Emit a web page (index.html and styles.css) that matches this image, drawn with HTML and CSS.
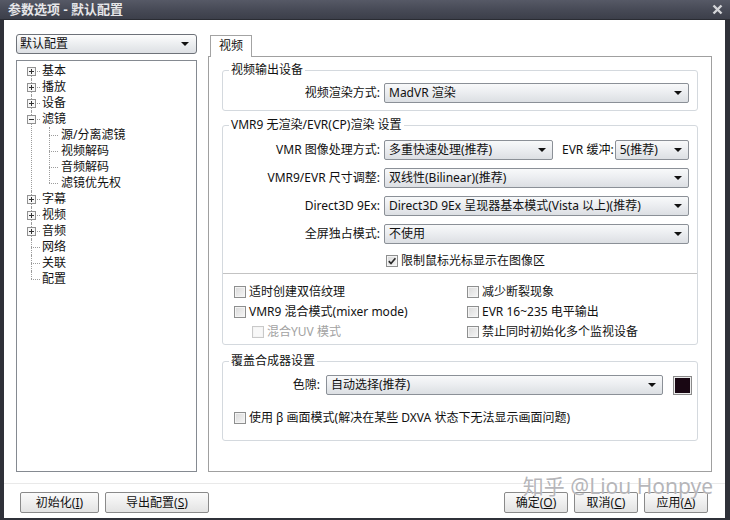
FILE: index.html
```html
<!DOCTYPE html>
<html lang="zh-CN">
<head>
  <meta charset="UTF-8">
  <title>参数选项 - 默认配置</title>
  <link rel="stylesheet" href="styles.css">
</head>
<body>
<div class="titlebar">
  <span class="title">参数选项 - 默认配置</span>
  <svg class="close" width="11" height="11" viewBox="0 0 11 11"><path d="M1.5 1.5L9.5 9.5M9.5 1.5L1.5 9.5" stroke="#d4d5d9" stroke-width="2.4"/></svg>
</div>

<div class="dialog">
  <div class="main">
    <div class="side">
      <div class="combo"><span class="val">默认配置</span><span class="arrow"></span></div>
      <div class="tree">
        <ul class="root">
          <li class="node first"><div class="row"><svg class="exp" width="9" height="9"><rect x="0.5" y="0.5" width="8" height="8" fill="#f7f7f7" stroke="#919191"/><path d="M2 4.5h5M4.5 2v5" stroke="#333"/></svg><span class="lbl">基本</span></div></li>
          <li class="node"><div class="row"><svg class="exp" width="9" height="9"><rect x="0.5" y="0.5" width="8" height="8" fill="#f7f7f7" stroke="#919191"/><path d="M2 4.5h5M4.5 2v5" stroke="#333"/></svg><span class="lbl">播放</span></div></li>
          <li class="node"><div class="row"><svg class="exp" width="9" height="9"><rect x="0.5" y="0.5" width="8" height="8" fill="#f7f7f7" stroke="#919191"/><path d="M2 4.5h5M4.5 2v5" stroke="#333"/></svg><span class="lbl">设备</span></div></li>
          <li class="node"><div class="row"><svg class="exp" width="9" height="9"><rect x="0.5" y="0.5" width="8" height="8" fill="#f7f7f7" stroke="#919191"/><path d="M2 4.5h5" stroke="#333"/></svg><span class="lbl">滤镜</span></div>
            <ul class="sub">
              <li><div class="row"><span class="lbl">源/分离滤镜</span></div></li>
              <li><div class="row"><span class="lbl">视频解码</span></div></li>
              <li><div class="row"><span class="lbl">音频解码</span></div></li>
              <li><div class="row"><span class="lbl">滤镜优先权</span></div></li>
            </ul>
          </li>
          <li class="node"><div class="row"><svg class="exp" width="9" height="9"><rect x="0.5" y="0.5" width="8" height="8" fill="#f7f7f7" stroke="#919191"/><path d="M2 4.5h5M4.5 2v5" stroke="#333"/></svg><span class="lbl">字幕</span></div></li>
          <li class="node"><div class="row"><svg class="exp" width="9" height="9"><rect x="0.5" y="0.5" width="8" height="8" fill="#f7f7f7" stroke="#919191"/><path d="M2 4.5h5M4.5 2v5" stroke="#333"/></svg><span class="lbl">视频</span></div></li>
          <li class="node"><div class="row"><svg class="exp" width="9" height="9"><rect x="0.5" y="0.5" width="8" height="8" fill="#f7f7f7" stroke="#919191"/><path d="M2 4.5h5M4.5 2v5" stroke="#333"/></svg><span class="lbl">音频</span></div></li>
          <li class="node"><div class="row"><span class="lbl leaf">网络</span></div></li>
          <li class="node"><div class="row"><span class="lbl leaf">关联</span></div></li>
          <li class="node last"><div class="row"><span class="lbl leaf">配置</span></div></li>
        </ul>
      </div>
    </div>

    <div class="right">
      <div class="tabs"><div class="tab">视频</div></div>
      <div class="panel">

        <fieldset class="g1">
          <legend>视频输出设备</legend>
          <div class="frow">
            <span class="flabel">视频渲染方式:</span>
            <div class="sel"><span class="val">MadVR 渲染</span><span class="arrow"></span></div>
          </div>
        </fieldset>

        <fieldset class="g2">
          <legend>VMR9 无渲染/EVR(CP)渲染 设置</legend>
          <div class="frow">
            <span class="flabel">VMR 图像处理方式:</span>
            <div class="split">
              <div class="sel s-mix"><span class="val">多重快速处理(推荐)</span><span class="arrow"></span></div>
              <span class="evr">EVR 缓冲:</span>
              <div class="sel s-buf"><span class="val">5(推荐)</span><span class="arrow"></span></div>
            </div>
          </div>
          <div class="frow">
            <span class="flabel">VMR9/EVR 尺寸调整:</span>
            <div class="sel"><span class="val">双线性(Bilinear)(推荐)</span><span class="arrow"></span></div>
          </div>
          <div class="frow">
            <span class="flabel">Direct3D 9Ex:</span>
            <div class="sel"><span class="val">Direct3D 9Ex 呈现器基本模式(Vista 以上)(推荐)</span><span class="arrow"></span></div>
          </div>
          <div class="frow">
            <span class="flabel">全屏独占模式:</span>
            <div class="sel"><span class="val">不使用</span><span class="arrow"></span></div>
          </div>
          <div class="check-line">
            <span class="cb on"><svg width="10" height="10" viewBox="0 0 10 10"><path d="M1.8 5.2L4 7.5L8.4 2.2" fill="none" stroke="#2b2b2b" stroke-width="1.7"/></svg></span>限制鼠标光标显示在图像区
          </div>
          <div class="sep"></div>
          <div class="cgrid">
            <div class="citem"><span class="cb"></span>适时创建双倍纹理</div>
            <div class="citem"><span class="cb"></span>减少断裂现象</div>
            <div class="citem"><span class="cb"></span>VMR9 混合模式(mixer mode)</div>
            <div class="citem"><span class="cb"></span>EVR 16~235 电平输出</div>
            <div class="citem off"><span class="cb"></span>混合YUV 模式</div>
            <div class="citem"><span class="cb"></span>禁止同时初始化多个监视设备</div>
          </div>
        </fieldset>

        <fieldset class="g3">
          <legend>覆盖合成器设置</legend>
          <div class="crow">
            <span class="clabel">色隙:</span>
            <div class="sel"><span class="val">自动选择(推荐)</span><span class="arrow"></span></div>
            <span class="swatch"></span>
          </div>
          <div class="citem beta"><span class="cb"></span>使用 β 画面模式(解决在某些 DXVA 状态下无法显示画面问题)</div>
        </fieldset>

      </div>
    </div>
  </div>

  <div class="bottom">
    <div class="btn b-init">初始化(<u>I</u>)</div>
    <div class="btn b-export">导出配置(<u>S</u>)</div>
    <div class="spacer"></div>
    <div class="btn">确定(<u>O</u>)</div>
    <div class="btn">取消(<u>C</u>)</div>
    <div class="btn">应用(<u>A</u>)</div>
  </div>

  <div class="watermark">知乎 @Liou Honpye</div>
</div>
</body>
</html>
```

FILE: styles.css
```css
* {
  margin: 0;
  padding: 0;
  box-sizing: border-box;
}

body {
  width: 730px;
  height: 520px;
  overflow: hidden;
  background: #2f3139;
  font-family: "Noto Sans", "Noto Sans CJK SC", sans-serif;
  font-size: 12px;
  line-height: 16px;
  color: #111;
}

ul {
  list-style: none;
}

/* title bar */
.titlebar {
  height: 20px;
  display: flex;
  align-items: center;
  justify-content: space-between;
  padding: 0 7px 0 8px;
  background: linear-gradient(#565966, #464955 55%, #3c3f4a);
  border-bottom: 1px solid #2a2c33;
}

.title {
  color: #e6e6e8;
  font-weight: bold;
  font-size: 13px;
  line-height: 19px;
}

/* dialog body */
.dialog {
  position: relative;
  height: 498px;
  margin: 0 5px 0 4px;
  background: #fff;
  display: flex;
  flex-direction: column;
}

.main {
  flex: 1;
  display: flex;
  gap: 11px;
  padding: 14px 13px 11px 12px;
}

.side {
  width: 181px;
  display: flex;
  flex-direction: column;
  gap: 6px;
}

.combo {
  height: 20px;
  display: flex;
  align-items: center;
  padding: 0 7px 0 3px;
  border: 1px solid #6e7279;
  border-radius: 3px;
  background: linear-gradient(#fdfdfd, #eceef0 50%, #dde0e4);
}

.val {
  flex: 1;
  white-space: nowrap;
  overflow: hidden;
}

.arrow {
  width: 0;
  height: 0;
  border-left: 4px solid transparent;
  border-right: 4px solid transparent;
  border-top: 4px solid #111;
}

/* tree */
.tree {
  flex: 1;
  border: 1px solid #858a91;
  padding-top: 2px;
}

.node {
  position: relative;
}

.node::before {
  content: '';
  position: absolute;
  left: 14px;
  top: 0;
  bottom: 0;
  border-left: 1px dotted #9c9c9c;
}

.node.first::before {
  top: 8px;
}

.node.last::before {
  bottom: auto;
  height: 8px;
}

.row {
  position: relative;
  height: 16px;
  display: flex;
  align-items: center;
}

.row::before {
  content: '';
  position: absolute;
  left: 14px;
  top: 8px;
  width: 9px;
  border-top: 1px dotted #9c9c9c;
}

.exp {
  position: relative;
  z-index: 1;
  margin-left: 10px;
  flex: none;
}

.lbl {
  margin-left: 6px;
  white-space: nowrap;
}

.lbl.leaf {
  margin-left: 25px;
}

.sub {
  position: relative;
}

.sub::before {
  content: '';
  position: absolute;
  left: 32px;
  top: 0;
  height: 56px;
  border-left: 1px dotted #9c9c9c;
}

.sub .row::before {
  left: 32px;
}

.sub .lbl {
  margin-left: 44px;
}

/* tab panel */
.right {
  flex: 1;
  display: flex;
  flex-direction: column;
  padding-top: 1px;
}

.tabs {
  height: 21px;
  display: flex;
  padding-left: 2px;
}

.tab {
  position: relative;
  z-index: 1;
  height: 22px;
  padding: 0 8px;
  border: 1px solid #a3a3a3;
  border-bottom: none;
  background: #fff;
  line-height: 20px;
}

.panel {
  flex: 1;
  border: 1px solid #a0a0a0;
  padding: 6px 13px 0 13px;
}

fieldset {
  border: 1px solid #d4d9de;
  border-radius: 3px;
  padding: 0 6px;
}

legend {
  padding: 0 2px;
  line-height: 14px;
}

.g1 {
  padding-bottom: 7px;
}

.g1 .frow {
  margin-top: 6px;
}

.g2 {
  margin-top: 7px;
  padding-bottom: 2px;
}

.g2 .frow {
  margin-top: 8px;
}

.g3 {
  margin-top: 9px;
  padding-bottom: 14px;
}

.frow {
  height: 20px;
  display: grid;
  grid-template-columns: 151px 1fr;
  column-gap: 4px;
  align-items: center;
  padding-right: 2px;
}

.flabel {
  text-align: right;
  white-space: nowrap;
}

.sel {
  height: 20px;
  display: flex;
  align-items: center;
  padding: 0 6px 0 4px;
  border: 1px solid #8b9097;
  border-radius: 2px;
  background: linear-gradient(#f8f9fa, #eceef1 45%, #dcdfe3);
}

.split {
  display: flex;
  align-items: center;
}

.s-mix {
  width: 169px;
}

.evr {
  margin: 0 1px 0 9px;
  white-space: nowrap;
}

.s-buf {
  flex: 1;
}

/* checkboxes */
.cb {
  width: 12px;
  height: 12px;
  flex: none;
  margin-right: 3px;
  display: flex;
  align-items: center;
  justify-content: center;
  border: 1px solid #8e8f8f;
  background: linear-gradient(135deg, #d9d9d9, #f6f6f6);
  box-shadow: inset 0 0 0 1px #f4f4f4;
}

.check-line {
  height: 16px;
  margin-top: 9px;
  padding-left: 157px;
  display: flex;
  align-items: center;
}

.sep {
  margin: 4px -6px 0;
  border-top: 1px solid #c3c3c3;
}

.cgrid {
  margin-top: 8px;
  padding-left: 5px;
  display: grid;
  grid-template-columns: 233px 1fr;
  grid-auto-rows: 20px;
}

.citem {
  display: flex;
  align-items: center;
  white-space: nowrap;
}

.citem.off {
  padding-left: 18px;
  color: #a2a2a2;
}

.citem.off .cb {
  border-color: #c9c9c9;
  background: #f8f8f8;
}

.crow {
  height: 20px;
  margin-top: 7px;
  display: flex;
  align-items: center;
  margin-right: -1px;
}

.clabel {
  width: 91px;
  margin-right: 6px;
  text-align: right;
}

.crow .sel {
  flex: 1;
}

.swatch {
  width: 19px;
  height: 19px;
  margin-left: 10px;
  border: 1px solid #8a8a8a;
  background: #190713;
  box-shadow: inset 0 0 0 1px #ececec;
}

.beta {
  height: 16px;
  margin-top: 15px;
  padding-left: 5px;
}

/* bottom buttons */
.bottom {
  height: 35px;
  display: flex;
  align-items: flex-start;
  gap: 6px;
  padding: 8px 17px 0 16px;
  border-top: 1px solid #e9e9e9;
}

.spacer {
  flex: 1;
}

.btn {
  width: 64px;
  height: 21px;
  display: flex;
  align-items: center;
  justify-content: center;
  border: 1px solid #8a8a8a;
  border-radius: 2px;
  background: linear-gradient(#fbfbfb, #efefef 50%, #e3e3e3);
  white-space: nowrap;
}

.b-init {
  width: 79px;
}

.b-export {
  width: 104px;
}

.watermark {
  position: absolute;
  right: 12px;
  bottom: 20px;
  font-size: 21px;
  line-height: 24px;
  color: rgba(150, 150, 155, 0.7);
  text-shadow: 0 0 1px #fff;
  white-space: nowrap;
}
```
